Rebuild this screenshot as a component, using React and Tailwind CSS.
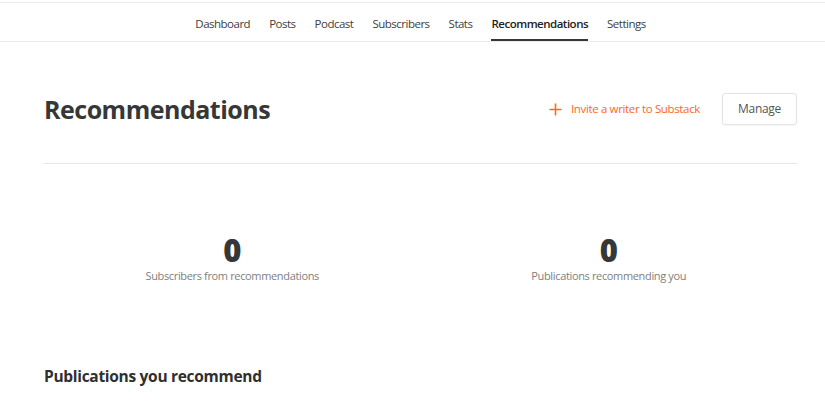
export default function App() {
  const nav = ["Dashboard", "Posts", "Podcast", "Subscribers", "Stats", "Recommendations", "Settings"];
  return (
    <div className="min-h-screen bg-white text-[#363737]" style={{ fontFamily: '"Open Sans", "Noto Sans", sans-serif' }}>
      <div className="pt-[2px]">
        <div className="border-t border-b border-[#ebebeb] h-[40px]">
          <div className="ml-[44px] w-[753px] h-full flex justify-center gap-[19px]">
            {nav.map((n) => (
              <div key={n} className={`relative h-full flex items-center pt-[3px] text-[11.5px] tracking-[-0.5px] ${n === "Recommendations" ? "font-semibold text-[#222]" : "text-[#404040]"}`}>
                {n}
                {n === "Recommendations" && <div className="absolute left-0 right-0 bottom-[0px] h-[2px] bg-[#363737]" />}
              </div>
            ))}
          </div>
        </div>
      </div>
      <div className="ml-[44px] w-[753px]">
        <div className="flex items-center justify-between pt-[51px] pb-[38px] border-b border-[#e6e6e6]">
          <h1 className="text-[25px] font-bold tracking-[-0.5px] leading-none">Recommendations</h1>
          <div className="flex items-center gap-[22px]">
            <button className="flex items-center gap-[9px] text-[#ff6719] text-[11.5px] tracking-[-0.35px]">
              <svg width="13" height="13" viewBox="0 0 13 13"><path d="M6.5 0.5v12M0.5 6.5h12" stroke="#ff6719" strokeWidth="1.6" /></svg>
              Invite a writer to Substack
            </button>
            <button className="w-[75px] h-[32px] border border-[#e3e3e3] rounded-[3px] text-[12px] tracking-[-0.3px] text-[#555] shadow-[0_1px_2px_rgba(0,0,0,0.04)]">Manage</button>
          </div>
        </div>
        <div className="grid grid-cols-2 pt-[70px]">
          {[["0", "Subscribers from recommendations"], ["0", "Publications recommending you"]].map(([v, l]) => (
            <div key={l} className="flex flex-col items-center">
              <div className="text-[31px] font-extrabold leading-[32px] text-[#363737]">{v}</div>
              <div className="text-[11px] text-[#808080] tracking-[-0.35px] mt-[2px]">{l}</div>
            </div>
          ))}
        </div>
        <h2 className="mt-[80px] text-[15.5px] font-bold tracking-[-0.3px] text-[#2f2f2f]">Publications you recommend</h2>
      </div>
    </div>
  );
}
